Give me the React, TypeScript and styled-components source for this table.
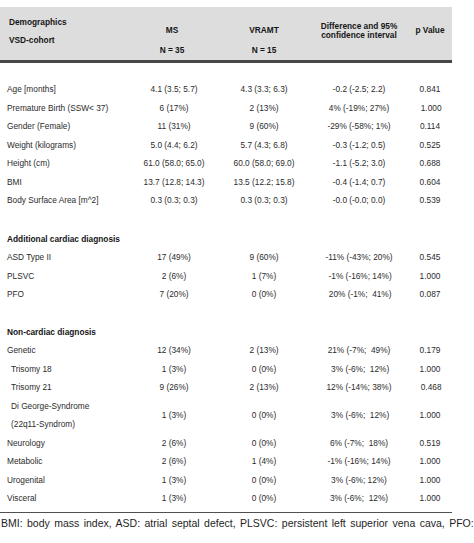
import styled, { createGlobalStyle } from "styled-components";

const GlobalStyle = createGlobalStyle`
  html, body {
    margin: 0;
    padding: 0;
    background: #fff;
    overflow: hidden;
  }
  body {
    font-family: "Liberation Sans", Arial, sans-serif;
    color: #2b2b2b;
  }
`;

const COLUMNS = "126px 92px 92px 98px 44px";

type DataRow = {
  label: string;
  ms: string;
  vramt: string;
  diff: string;
  p: string;
  indent?: boolean;
  sub?: string;
};

type Group = {
  title?: string;
  gap: number;
  rows: DataRow[];
};

const groups: Group[] = [
  {
    gap: 17,
    rows: [
      { label: "Age [months]", ms: "4.1 (3.5; 5.7)", vramt: "4.3 (3.3; 6.3)", diff: "-0.2 (-2.5; 2.2)", p: "0.841" },
      { label: "Premature Birth (SSW< 37)", ms: "6 (17%)", vramt: "2 (13%)", diff: "4% (-19%; 27%)", p: " 1.000" },
      { label: "Gender (Female)", ms: "11 (31%)", vramt: "9 (60%)", diff: "-29% (-58%; 1%)", p: "0.114" },
      { label: "Weight (kilograms)", ms: "5.0 (4.4; 6.2)", vramt: "5.7 (4.3; 6.8)", diff: "-0.3 (-1.2; 0.5)", p: "0.525" },
      { label: "Height (cm)", ms: "61.0 (58.0; 65.0)", vramt: "60.0 (58.0; 69.0)", diff: "-1.1 (-5.2; 3.0)", p: "0.688" },
      { label: "BMI", ms: "13.7 (12.8; 14.3)", vramt: "13.5 (12.2; 15.8)", diff: "-0.4 (-1.4; 0.7)", p: "0.604" },
      { label: "Body Surface Area [m^2]", ms: "0.3 (0.3; 0.3)", vramt: "0.3 (0.3; 0.3)", diff: "-0.0 (-0.0; 0.0)", p: "0.539" },
    ],
  },
  {
    title: "Additional cardiac diagnosis",
    gap: 20,
    rows: [
      { label: "ASD Type II", ms: "17 (49%)", vramt: "9 (60%)", diff: "-11% (-43%; 20%)", p: "0.545" },
      { label: "PLSVC", ms: "2 (6%)", vramt: "1 (7%)", diff: " -1% (-16%; 14%)", p: "1.000" },
      { label: "PFO", ms: "7 (20%)", vramt: "0 (0%)", diff: " 20% (-1%;  41%)", p: "0.087" },
    ],
  },
  {
    title: "Non-cardiac diagnosis",
    gap: 19,
    rows: [
      { label: "Genetic", ms: "12 (34%)", vramt: "2 (13%)", diff: "21% (-7%;  49%)", p: "0.179" },
      { label: "Trisomy 18", indent: true, ms: "1 (3%)", vramt: "0 (0%)", diff: " 3% (-6%;  12%)", p: "1.000" },
      { label: "Trisomy 21", indent: true, ms: "9 (26%)", vramt: "2 (13%)", diff: "12% (-14%; 38%)", p: " 0.468" },
      { label: "Di George-Syndrome", sub: "(22q11-Syndrom)", indent: true, ms: "1 (3%)", vramt: "0 (0%)", diff: " 3% (-6%;  12%)", p: "1.000" },
      { label: "Neurology", ms: "2 (6%)", vramt: "0 (0%)", diff: "6% (-7%;  18%)", p: "0.519" },
      { label: "Metabolic", ms: "2 (6%)", vramt: "1 (4%)", diff: "-1% (-16%; 14%)", p: "1.000" },
      { label: "Urogenital", ms: "1 (3%)", vramt: "0 (0%)", diff: "3% (-6%; 12%)", p: "1.000" },
      { label: "Visceral", ms: "1 (3%)", vramt: "0 (0%)", diff: "3% (-6%;  12%)", p: "1.000" },
    ],
  },
];

const Page = styled.div`
  width: 474px;
  padding-top: 7px;
`;

const Table = styled.div`
  width: 452px;
  font-size: 8.3px;
`;

const HeaderRow = styled.div`
  display: grid;
  grid-template-columns: ${COLUMNS};
  height: 53px;
  background: #dddddd;
  border-bottom: 3px solid #474747;
  font-weight: 700;
  color: #151515;
`;

const HeaderLabel = styled.div`
  padding: 6px 0 0 9px;
  line-height: 18px;
`;

const HeaderGroup = styled.div`
  text-align: center;
  padding-top: 13px;
  line-height: 20px;
`;

const HeaderCentered = styled.div`
  display: flex;
  align-items: center;
  justify-content: center;
  text-align: center;
  line-height: 9px;
  padding-bottom: 6px;
`;

const Spacer = styled.div<{ $h: number }>`
  height: ${({ $h }) => $h}px;
`;

const Row = styled.div<{ $double?: boolean }>`
  display: grid;
  grid-template-columns: ${COLUMNS};
  align-items: center;
  height: ${({ $double }) => ($double ? 37 : 18.5)}px;
  line-height: 18.5px;
`;

const SectionTitle = styled.div`
  height: 18.5px;
  line-height: 18.5px;
  padding-left: 7px;
  font-weight: 700;
  color: #151515;
`;

const Label = styled.div<{ $indent?: boolean }>`
  padding-left: ${({ $indent }) => ($indent ? 11 : 7)}px;
  white-space: nowrap;
`;

const Value = styled.div<{ $shift?: number }>`
  text-align: center;
  white-space: pre;
  padding-left: ${({ $shift }) => $shift ?? 0}px;
`;

const BottomRule = styled.div`
  height: 1px;
  background: #505050;
  margin-top: 4px;
`;

const Footnote = styled.p`
  margin: 4px 0 0 1px;
  width: 472px;
  font-size: 10.5px;
  line-height: 13px;
  color: #1e1e1e;
  text-align: justify;
  text-align-last: justify;
  white-space: nowrap;
  word-spacing: 1.5px;
`;

export default function App() {
  return (
    <Page>
      <GlobalStyle />
      <Table>
        <HeaderRow>
          <HeaderLabel>
            Demographics
            <br />
            VSD-cohort
          </HeaderLabel>
          <HeaderGroup>
            MS
            <br />N = 35
          </HeaderGroup>
          <HeaderGroup>
            VRAMT
            <br />N = 15
          </HeaderGroup>
          <HeaderCentered>
            Difference and 95%
            <br />
            confidence interval
          </HeaderCentered>
          <HeaderCentered>p Value</HeaderCentered>
        </HeaderRow>

        {groups.map((group, gi) => (
          <div key={gi}>
            <Spacer $h={group.gap} />
            {group.title && <SectionTitle>{group.title}</SectionTitle>}
            {group.rows.map((row) => (
              <Row key={row.label} $double={!!row.sub}>
                <Label $indent={row.indent}>
                  {row.label}
                  {row.sub && (
                    <>
                      <br />
                      {row.sub}
                    </>
                  )}
                </Label>
                <Value $shift={4}>{row.ms}</Value>
                <Value $shift={-2}>{row.vramt}</Value>
                <Value>{row.diff}</Value>
                <Value>{row.p}</Value>
              </Row>
            ))}
          </div>
        ))}
        <BottomRule />
      </Table>
      <Footnote>
        BMI: body mass index, ASD: atrial septal defect, PLSVC: persistent left
        superior vena cava, PFO:
      </Footnote>
    </Page>
  );
}
